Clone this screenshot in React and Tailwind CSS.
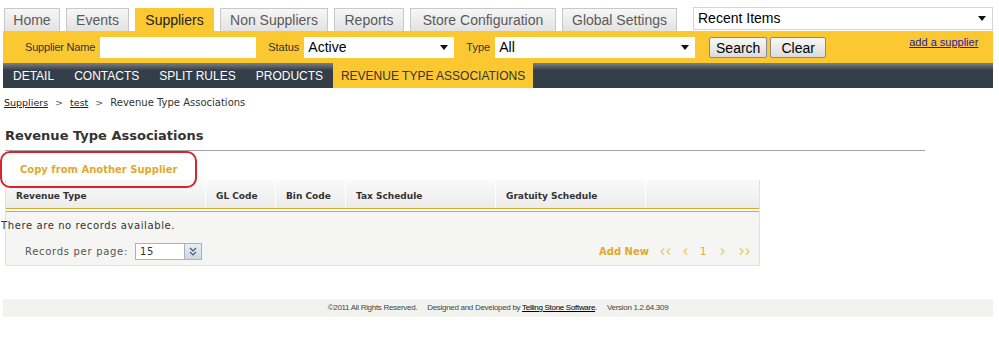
import { ChevronDown } from "lucide-react";

const TABS = [
  { label: "Home", w: "w-[56px]" },
  { label: "Events", w: "w-[63px]" },
  { label: "Suppliers", w: "w-[79px]", active: true },
  { label: "Non Suppliers", w: "w-[108px]" },
  { label: "Reports", w: "w-[70px]" },
  { label: "Store Configuration", w: "w-[146px]" },
  { label: "Global Settings", w: "w-[115px]" },
];

const SUBNAV = ["DETAIL", "CONTACTS", "SPLIT RULES", "PRODUCTS"];

const COLUMNS = [
  { label: "Revenue Type", w: "w-[200px]" },
  { label: "GL Code", w: "w-[70px]" },
  { label: "Bin Code", w: "w-[70px]" },
  { label: "Tax Schedule", w: "w-[150px]" },
  { label: "Gratuity Schedule", w: "w-[150px]" },
  { label: "", w: "flex-1" },
];

function Caret() {
  return (
    <svg width="8" height="5" viewBox="0 0 8 5" className="shrink-0">
      <path d="M0 0h8L4 5z" fill="#111" />
    </svg>
  );
}

function SelectBox({ value, className = "" }) {
  return (
    <div className={`flex items-center justify-between bg-white pl-[4px] pr-[6px] ${className}`}>
      <span className="text-[14px] text-black">{value}</span>
      <Caret />
    </div>
  );
}

// pager arrow: dir -1 left, 1 right; count 1 or 2 chevrons
function PagerArrow({ dir, count }) {
  const w = count === 2 ? 13 : 7;
  const chev = (x) =>
    dir < 0 ? `M${x + 4} 1.5L${x + 1} 4.5L${x + 4} 7.5` : `M${x + 1} 1.5L${x + 4} 4.5L${x + 1} 7.5`;
  return (
    <svg width={w} height="9" viewBox={`0 0 ${w} 9`}>
      <path d={chev(0)} fill="none" stroke="#ecc86e" strokeWidth="1.3" />
      {count === 2 ? <path d={chev(6)} fill="none" stroke="#ecc86e" strokeWidth="1.3" /> : null}
    </svg>
  );
}

export default function App() {
  return (
    <div className="h-[342px] w-[999px] overflow-hidden bg-white font-['Liberation_Sans',Arial,sans-serif] text-[#333]">
      <div className="w-[996px] pl-[3px]">
        {/* top tabs */}
        <div className="flex h-[31px] items-end">
          <div className="ml-[1px] flex gap-[6px]">
            {TABS.map((t) => (
              <div
                key={t.label}
                className={`flex h-[23px] items-center justify-center border border-b-0 text-[14px] ${t.w} ${
                  t.active
                    ? "border-[#fcc832] bg-[#fcc832] text-[#222]"
                    : "border-[#c8c8c8] bg-gradient-to-b from-[#f7f7f7] to-[#e2e2e2] text-[#5a5a5a]"
                }`}
              >
                {t.label}
              </div>
            ))}
          </div>
          <SelectBox
            value="Recent Items"
            className="mb-[1px] ml-[16px] h-[23px] w-[300px] border border-[#d4d4d4]"
          />
        </div>

        {/* search bar */}
        <div className="flex h-[32px] w-[990px] items-center bg-[#fcc832] text-[11px] text-[#333]">
          <span className="ml-[22px] tracking-[-0.2px]">Supplier Name</span>
          <div className="ml-[5px] h-[21px] w-[156px] bg-white" />
          <span className="ml-[12px]">Status</span>
          <SelectBox value="Active" className="ml-[5px] h-[21px] w-[150px]" />
          <span className="ml-[12px]">Type</span>
          <SelectBox value="All" className="ml-[5px] h-[21px] w-[200px]" />
          <button className="ml-[14px] h-[21px] w-[58px] rounded-[2px] border border-[#8a8a8a] bg-gradient-to-b from-[#f8f8f8] to-[#dcdcdc] text-[14px] text-black">
            Search
          </button>
          <button className="ml-[3px] h-[21px] w-[56px] rounded-[2px] border border-[#8a8a8a] bg-gradient-to-b from-[#f8f8f8] to-[#dcdcdc] text-[14px] text-black">
            Clear
          </button>
          <a className="mb-[10px] ml-[83px] text-[11px] text-[#1a1aa6] underline">add a supplier</a>
        </div>

        {/* sub navigation */}
        <div className="flex h-[25px] w-[990px] items-stretch bg-gradient-to-b from-[#7b8085] via-[#343e48] via-[30%] to-[#323d47] text-[12px] text-white">
          <div className="flex items-center gap-[20px] pl-[10px] pr-[10px]">
            {SUBNAV.map((s) => (
              <span key={s}>{s}</span>
            ))}
          </div>
          <div className="flex w-[200px] items-center justify-center bg-[#fcc832] text-[#333]">
            REVENUE TYPE ASSOCIATIONS
          </div>
        </div>
      </div>

      {/* content */}
      <div className="relative font-['DejaVu_Sans',Verdana,sans-serif]">
        <div className="flex h-[21px] items-end pl-[4px] text-[9.5px] leading-[12px] text-[#222]">
          <span className="underline">Suppliers</span>
          <span className="mx-[7px] text-[#555]">&gt;</span>
          <span className="underline">test</span>
          <span className="mx-[7px] text-[#555]">&gt;</span>
          <span className="text-[10px] text-[#333]">Revenue Type Associations</span>
        </div>

        <h1 className="mt-[19px] ml-[5px] w-[920px] border-b border-[#a3a3a3] pb-[6px] text-[13px] font-bold leading-[16px] text-[#333]">
          Revenue Type Associations
        </h1>

        <div className="ml-[20px] mt-[10px] h-[18px] text-[10px] font-bold leading-[18px] text-[#e1a92d]">
          Copy from Another Supplier
        </div>

        {/* grid */}
        <div className="mt-[1px] ml-[5px] w-[755px] border border-t-0 border-[#e2e2dc] bg-[#f5f5f3]">
          <div className="flex h-[28px] bg-gradient-to-b from-[#fafafa] to-[#ececec] text-[9px] font-bold text-[#333]">
            {COLUMNS.map((c, i) => (
              <div
                key={i}
                className={`flex items-center pl-[10px] pt-[6px] ${c.w} ${i < COLUMNS.length - 1 ? "border-r border-[#ffffff]" : ""}`}
              >
                {c.label}
              </div>
            ))}
          </div>
          <div className="h-[4px] border-y border-[#dea62a] bg-white" />
          <div className="-ml-[5px] flex h-[26px] items-center text-[10px] tracking-[0.6px] text-[#333]">
            There are no records available.
          </div>
          <div className="flex h-[27px] items-center pl-[19px] pr-[7px] text-[10px] tracking-[0.7px] text-[#555]">
            <span>Records per page:</span>
            <div className="ml-[7px] flex h-[17px] w-[67px] items-center justify-between border border-[#a9b2bd] bg-white pl-[4px]">
              <span className="text-[#333]">15</span>
              <div className="flex h-full w-[17px] items-center justify-center border-l border-[#a9b2bd] bg-gradient-to-b from-[#e8eef5] to-[#cdd8e3]">
                <svg width="8" height="9" viewBox="0 0 8 9">
                  <path d="M1 1l3 3 3-3M1 5l3 3 3-3" fill="none" stroke="#4a5a6e" strokeWidth="1.2" />
                </svg>
              </div>
            </div>
            <div className="ml-auto flex items-center text-[#e1a92d]">
              <span className="mr-[11px] font-bold tracking-normal">Add New</span>
              <PagerArrow dir={-1} count={2} />
              <span className="ml-[10px]"><PagerArrow dir={-1} count={1} /></span>
              <span className="ml-[10px]">1</span>
              <span className="ml-[13px]"><PagerArrow dir={1} count={1} /></span>
              <span className="ml-[12px]"><PagerArrow dir={1} count={2} /></span>
            </div>
          </div>
        </div>

        {/* red annotation circle */}
        <div className="absolute left-0 top-[63px] h-[37px] w-[197px] rounded-[10px] border-2 border-[#d6262c]" />
      </div>

      {/* footer */}
      <div className="ml-[3px] mt-[33px] flex h-[18px] w-[990px] items-center justify-center bg-[#f2f2ee] text-[8px] tracking-[-0.3px] text-[#444]">
        <span>©2011 All Rights Reserved.</span>
        <span className="ml-[10px]">
          Designed and Developed by <span className="text-black underline">Telling Stone Software</span>.
        </span>
        <span className="ml-[10px]">Version 1.2.64.309</span>
      </div>
    </div>
  );
}
